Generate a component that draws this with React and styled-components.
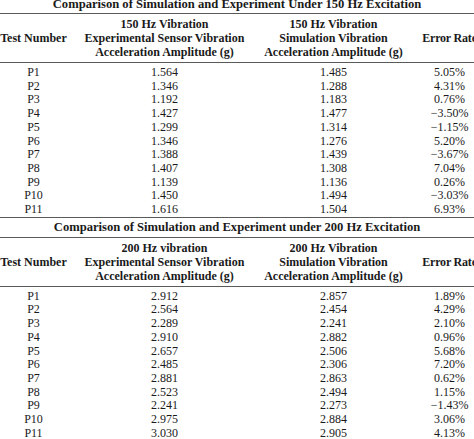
import React from "react";
import styled, { createGlobalStyle } from "styled-components";

const Global = createGlobalStyle`
  html, body { margin: 0; padding: 0; background: #fff; }
  body { overflow: hidden; width: 474px; height: 439px; }
`;

const Page = styled.div`
  width: 474px;
  height: 439px;
  overflow: hidden;
  font-family: "Liberation Serif", "Times New Roman", serif;
  color: #1a1a1a;
`;

const Stack = styled.div`
  margin-top: -6px;
  width: 494px;
`;

const Table = styled.table`
  width: 494px;
  border-collapse: collapse;
  table-layout: fixed;
  font-size: 12px;
`;

const Caption = styled.th`
  font-weight: bold;
  height: 19px;
  padding: 0 20px 0 0;
  text-align: center;
  font-size: 12.6px;
  line-height: 14px;
  border-bottom: 1px solid #5a5a5a;
  border-top: ${(p) => (p.$top ? "1px solid #5a5a5a" : "none")};
`;

const HeadCell = styled.th`
  font-weight: bold;
  padding: 3px 0;
  line-height: 14px;
  text-align: center;
  vertical-align: middle;
  border-bottom: 1px solid #5a5a5a;
  white-space: nowrap;
  letter-spacing: ${(p) => (p.$tight ? "-0.2px" : "normal")};
`;

const Cell = styled.td`
  padding: 0;
  height: 13.7px;
  line-height: 13.7px;
  text-align: center;
  white-space: nowrap;
  padding-top: ${(p) => (p.$first ? "3px" : "0")};
`;

const table1 = {
  title: "Comparison of Simulation and Experiment Under 150 Hz Excitation",
  h2: ["150 Hz Vibration", "Experimental Sensor Vibration", "Acceleration Amplitude (g)"],
  h3: ["150 Hz Vibration", "Simulation Vibration", "Acceleration Amplitude (g)"],
  rows: [
    ["P1", "1.564", "1.485", "5.05%"],
    ["P2", "1.346", "1.288", "4.31%"],
    ["P3", "1.192", "1.183", "0.76%"],
    ["P4", "1.427", "1.477", "\u22123.50%"],
    ["P5", "1.299", "1.314", "\u22121.15%"],
    ["P6", "1.346", "1.276", "5.20%"],
    ["P7", "1.388", "1.439", "\u22123.67%"],
    ["P8", "1.407", "1.308", "7.04%"],
    ["P9", "1.139", "1.136", "0.26%"],
    ["P10", "1.450", "1.494", "\u22123.03%"],
    ["P11", "1.616", "1.504", "6.93%"],
  ],
};

const table2 = {
  title: "Comparison of Simulation and Experiment under 200 Hz Excitation",
  h2: ["200 Hz vibration", "Experimental Sensor Vibration", "Acceleration Amplitude (g)"],
  h3: ["200 Hz Vibration", "Simulation Vibration", "Acceleration Amplitude (g)"],
  rows: [
    ["P1", "2.912", "2.857", "1.89%"],
    ["P2", "2.564", "2.454", "4.29%"],
    ["P3", "2.289", "2.241", "2.10%"],
    ["P4", "2.910", "2.882", "0.96%"],
    ["P5", "2.657", "2.506", "5.68%"],
    ["P6", "2.485", "2.306", "7.20%"],
    ["P7", "2.881", "2.863", "0.62%"],
    ["P8", "2.523", "2.494", "1.15%"],
    ["P9", "2.241", "2.273", "\u22121.43%"],
    ["P10", "2.975", "2.884", "3.06%"],
    ["P11", "3.030", "2.905", "4.13%"],
  ],
};

function Lines({ items }) {
  return items.map((t, i) => (
    <React.Fragment key={i}>
      {t}
      {i < items.length - 1 && <br />}
    </React.Fragment>
  ));
}

function DataTable({ data, top }) {
  return (
    <Table>
      <colgroup>
        <col style={{ width: 67 }} />
        <col style={{ width: 195 }} />
        <col style={{ width: 143 }} />
        <col style={{ width: 89 }} />
      </colgroup>
      <thead>
        <tr>
          <Caption colSpan={4} $top={top}>{data.title}</Caption>
        </tr>
        <tr>
          <HeadCell>Test Number</HeadCell>
          <HeadCell><Lines items={data.h2} /></HeadCell>
          <HeadCell><Lines items={data.h3} /></HeadCell>
          <HeadCell $tight>Error Rate</HeadCell>
        </tr>
      </thead>
      <tbody>
        {data.rows.map((r, i) => (
          <tr key={r[0]}>
            {r.map((c, j) => (
              <Cell key={j} $first={i === 0}>{c}</Cell>
            ))}
          </tr>
        ))}
      </tbody>
    </Table>
  );
}

export default function App() {
  return (
    <Page>
      <Global />
      <Stack>
        <DataTable data={table1} />
        <DataTable data={table2} top />
      </Stack>
    </Page>
  );
}
